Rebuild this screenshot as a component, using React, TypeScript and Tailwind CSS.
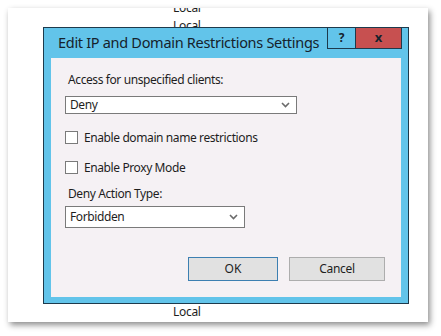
import React from "react";

const font = { fontFamily: '"Noto Sans", "Open Sans", sans-serif' };

function Select({ value, width, height }: { value: string; width: string; height: string }) {
  return (
    <div
      className={`flex items-center justify-between border border-[#7a7a7a] bg-white pl-[4px] pr-[6px] text-[12px] tracking-[-0.4px] text-[#1e1e1e] ${width} ${height}`}
    >
      <span>{value}</span>
      <svg width="9" height="6" viewBox="0 0 9 6">
        <path d="M1 1 L4.5 4.5 L8 1" stroke="#6b6b6b" strokeWidth="1.6" fill="none" />
      </svg>
    </div>
  );
}

function Check({ label }: { label: string }) {
  return (
    <div className="flex h-[13px] items-center gap-[6px]">
      <div className="h-[13px] w-[13px] border border-[#7a7a7a] bg-white" />
      <span className="text-[12px] leading-[16px] tracking-[-0.4px] text-[#1e1e1e]">{label}</span>
    </div>
  );
}

export default function App() {
  const rows = Array.from({ length: 18 }, (_, i) => (i === 0 || i === 1 || i === 17 ? "Local" : ""));
  return (
    <div className="h-[336px] w-[441px] overflow-hidden bg-white pl-[8px] pt-[8px]" style={font}>
      <div className="relative h-[314px] w-[420px] overflow-hidden bg-white shadow-[2px_3px_6px_rgba(0,0,0,0.45)]">
        <div className="-mt-[9px] flex flex-col pl-[165px]">
          {rows.map((t, i) => (
            <div key={i} className="h-[17.9px] text-[12px] leading-[17.9px] tracking-[-0.3px] text-[#1e1e1e]">
              {t}
            </div>
          ))}
        </div>

        <div className="absolute left-[35px] top-[19px] flex h-[277px] w-[366px] flex-col border border-[#1d3a4c] bg-[#62c4ea]">
          <div className="relative h-[30px] shrink-0">
            <div className="pl-[14px] pt-[4px] text-[14.5px] leading-[20px] tracking-[-0.3px] text-[#15222c]">
              Edit IP and Domain Restrictions Settings
            </div>
            <div className="absolute right-[6px] top-[-1px] flex h-[22px]">
              <div className="flex w-[29px] items-center justify-center border border-[#1d3a4c] bg-[#62c4ea] text-[12px] font-bold text-[#15222c]">
                ?
              </div>
              <div className="-ml-px flex w-[47px] items-center justify-center border border-[#1d3a4c] bg-[#c75050] text-[13px] font-bold text-[#15222c]">
                x
              </div>
            </div>
          </div>

          <div className="mx-[7px] mb-[6px] flex flex-1 flex-col bg-[#f5f1f4] pl-[14px] pt-[14px]">
            <div className="pl-[3px] text-[12px] leading-[16px] tracking-[-0.4px] text-[#1e1e1e]">
              Access for unspecified clients:
            </div>
            <div className="mt-[8px]">
              <Select value="Deny" width="w-[232px]" height="h-[18px]" />
            </div>
            <div className="mt-[17px]">
              <Check label="Enable domain name restrictions" />
            </div>
            <div className="mt-[17px]">
              <Check label="Enable Proxy Mode" />
            </div>
            <div className="mt-[12px] pl-[3px] text-[12px] leading-[16px] tracking-[-0.4px] text-[#1e1e1e]">
              Deny Action Type:
            </div>
            <div className="mt-[4px]">
              <Select value="Forbidden" width="w-[180px]" height="h-[22px]" />
            </div>
            <div className="mt-[29px] flex justify-end gap-[11px] pr-[16px]">
              <div className="flex h-[24px] w-[90px] items-center justify-center border border-[#3c7fb1] bg-[#e1e1e1] text-[12px] text-[#1e1e1e]">
                OK
              </div>
              <div className="flex h-[24px] w-[96px] items-center justify-center border border-[#adadad] bg-[#e1e1e1] text-[12px] tracking-[-0.3px] text-[#1e1e1e]">
                Cancel
              </div>
            </div>
          </div>
        </div>
      </div>
    </div>
  );
}
